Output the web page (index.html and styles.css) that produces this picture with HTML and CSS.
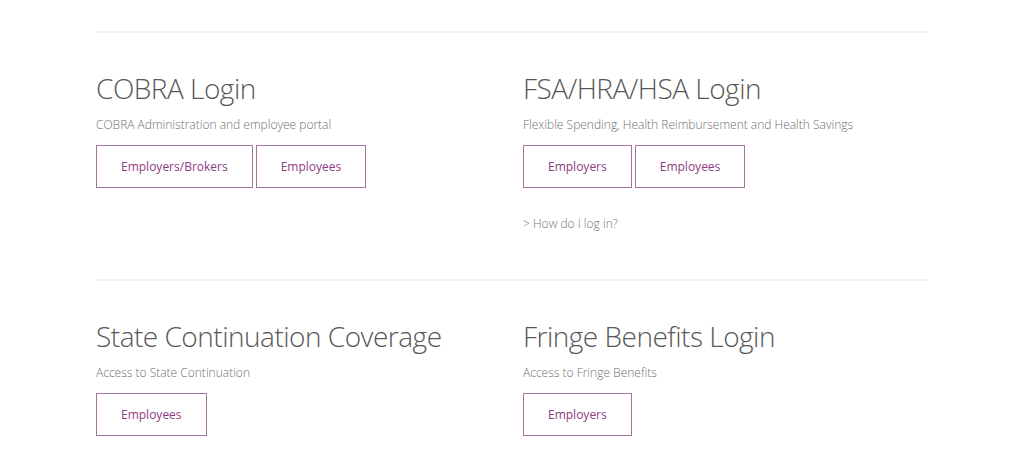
FILE: index.html
```html
<!DOCTYPE html>
<html>
<head>
<meta charset="utf-8">
<link rel="stylesheet" href="styles.css">
</head>
<body>
<main class="page">
  <section class="row">
    <div class="card">
      <h2 class="title">COBRA Login</h2>
      <p class="desc">COBRA Administration and employee portal</p>
      <div class="buttons">
        <a class="btn" href="#">Employers/Brokers</a>
        <a class="btn" href="#">Employees</a>
      </div>
    </div>
    <div class="card">
      <h2 class="title">FSA/HRA/HSA Login</h2>
      <p class="desc">Flexible Spending, Health Reimbursement and Health Savings</p>
      <div class="buttons">
        <a class="btn" href="#">Employers</a>
        <a class="btn" href="#">Employees</a>
      </div>
      <a class="help" href="#">&gt; How do I log in?</a>
    </div>
  </section>
  <section class="row">
    <div class="card">
      <h2 class="title">State Continuation Coverage</h2>
      <p class="desc">Access to State Continuation</p>
      <div class="buttons">
        <a class="btn" href="#">Employees</a>
      </div>
    </div>
    <div class="card">
      <h2 class="title">Fringe Benefits Login</h2>
      <p class="desc">Access to Fringe Benefits</p>
      <div class="buttons">
        <a class="btn" href="#">Employers</a>
      </div>
    </div>
  </section>
</main>
</body>
</html>
```

FILE: styles.css
```css
html, body {
  margin: 0;
  padding: 0;
  background: #ffffff;
}

body {
  font-family: "Open Sans", "Liberation Sans", sans-serif;
  color: #555555;
}

.page {
  width: 832px;
  margin: 0 auto;
  padding-top: 31px;
}

.row {
  display: grid;
  grid-template-columns: 427px 1fr;
  border-top: 2px solid #efefef;
  padding-top: 37px;
  min-height: 209px;
}

.card {
  display: flex;
  flex-direction: column;
  align-items: flex-start;
}

.title {
  margin: 0;
  font-size: 28px;
  font-weight: 300;
  letter-spacing: -0.5px;
  line-height: 36px;
  color: #585858;
}

.desc {
  margin: 9px 0 0;
  font-size: 12px;
  font-weight: 300;
  line-height: 20px;
  color: #707070;
}

.buttons {
  display: flex;
  gap: 3px;
  margin-top: 10px;
}

.btn {
  display: block;
  padding: 11px 24px;
  border: 1px solid #a7739f;
  font-size: 12px;
  line-height: 19px;
  font-weight: 400;
  color: #8e3b84;
  text-decoration: none;
}

.help {
  margin-top: 26px;
  font-size: 12px;
  font-weight: 300;
  line-height: 20px;
  color: #777777;
  text-decoration: none;
}
```
